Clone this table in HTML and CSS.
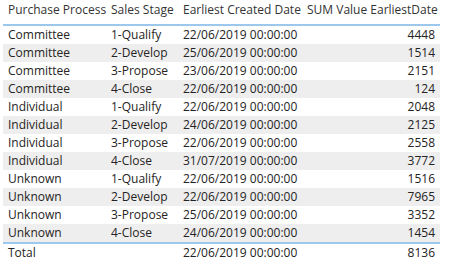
FILE: index.html
```html
<!DOCTYPE html>
<html>
<head>
<meta charset="utf-8">
<link rel="stylesheet" href="styles.css">
</head>
<body>
<div class="wrap">
<table class="grid">
<colgroup><col class="c1"><col class="c2"><col class="c3"><col class="c4"></colgroup>
<thead>
<tr><th>Purchase Process</th><th>Sales Stage</th><th>Earliest Created Date</th><th>SUM Value EarliestDate</th></tr>
</thead>
<tbody>
<tr><td>Committee</td><td>1-Qualify</td><td>22/06/2019 00:00:00</td><td class="num">4448</td></tr>
<tr class="alt"><td>Committee</td><td>2-Develop</td><td>25/06/2019 00:00:00</td><td class="num">1514</td></tr>
<tr><td>Committee</td><td>3-Propose</td><td>23/06/2019 00:00:00</td><td class="num">2151</td></tr>
<tr class="alt"><td>Committee</td><td>4-Close</td><td>22/06/2019 00:00:00</td><td class="num">124</td></tr>
<tr><td>Individual</td><td>1-Qualify</td><td>22/06/2019 00:00:00</td><td class="num">2048</td></tr>
<tr class="alt"><td>Individual</td><td>2-Develop</td><td>24/06/2019 00:00:00</td><td class="num">2125</td></tr>
<tr><td>Individual</td><td>3-Propose</td><td>22/06/2019 00:00:00</td><td class="num">2558</td></tr>
<tr class="alt"><td>Individual</td><td>4-Close</td><td>31/07/2019 00:00:00</td><td class="num">3772</td></tr>
<tr><td>Unknown</td><td>1-Qualify</td><td>22/06/2019 00:00:00</td><td class="num">1516</td></tr>
<tr class="alt"><td>Unknown</td><td>2-Develop</td><td>22/06/2019 00:00:00</td><td class="num">7965</td></tr>
<tr><td>Unknown</td><td>3-Propose</td><td>25/06/2019 00:00:00</td><td class="num">3352</td></tr>
<tr class="alt"><td>Unknown</td><td>4-Close</td><td>24/06/2019 00:00:00</td><td class="num">1454</td></tr>
</tbody>
<tfoot>
<tr><td>Total</td><td></td><td>22/06/2019 00:00:00</td><td class="num">8136</td></tr>
</tfoot>
</table>
</div>
</body>
</html>
```
FILE: styles.css
```css
html, body {
  margin: 0;
  padding: 0;
  background: #ffffff;
}
.wrap {
  padding-left: 3px;
}
.grid {
  border-collapse: collapse;
  table-layout: fixed;
  width: 437px;
  font-family: "Open Sans", sans-serif;
  font-size: 12px;
  color: #252423;
}
.c1 { width: 103px; }
.c2 { width: 72px; }
.c3 { width: 124px; }
.c4 { width: 138px; }
.grid th {
  font-weight: normal;
  text-align: left;
  height: 18px;
  line-height: 18px;
  padding: 1px 0 5px 5px;
  white-space: nowrap;
  color: #333333;
  border-bottom: 2px solid #9cc8ee;
  vertical-align: middle;
}
.grid td {
  height: 18px;
  padding: 0 0 0 5px;
  white-space: nowrap;
  vertical-align: middle;
  line-height: 18px;
}
.grid td.num {
  text-align: right;
  padding: 0 5px 0 0;
}
.grid tr.alt td {
  background: #eeeeee;
}
.grid tfoot td {
  border-top: 2px solid #9cc8ee;
}
```
